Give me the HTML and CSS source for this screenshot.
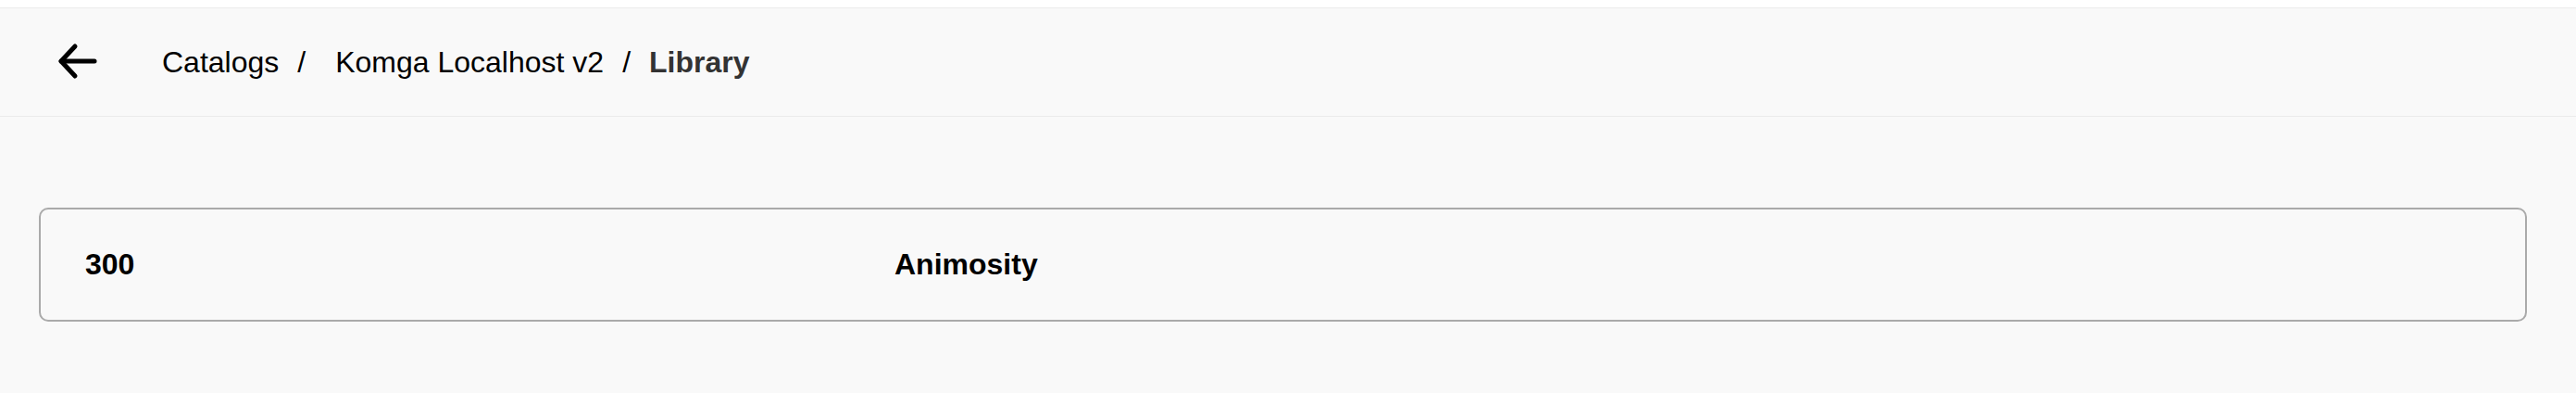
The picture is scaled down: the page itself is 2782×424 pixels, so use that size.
FILE: index.html
```html
<!DOCTYPE html>
<html lang="en">
<head>
<meta charset="utf-8">
<title>Library</title>
<link rel="stylesheet" href="styles.css">
</head>
<body>
<div class="page">
  <header class="topbar">
    <button class="back" aria-label="Back">
      <svg width="44" height="40" viewBox="0 0 44 40" fill="none" stroke="#000" stroke-width="5" stroke-linecap="round" stroke-linejoin="round">
        <line x1="4" y1="20" x2="40" y2="20"/>
        <polyline points="19,4 4,20 19,36"/>
      </svg>
    </button>
    <nav class="crumbs">
      <a class="crumb">Catalogs</a>
      <span class="sep">/</span>
      <a class="crumb crumb-pad">Komga Localhost v2</a>
      <span class="sep">/</span>
      <span class="crumb current">Library</span>
    </nav>
  </header>
  <main class="content">
    <div class="row">
      <span class="cell">300</span>
      <span class="cell">Animosity</span>
    </div>
  </main>
</div>
</body>
</html>
```
FILE: styles.css
```css
html, body {
  margin: 0;
  padding: 0;
  background: #ffffff;
}
body {
  padding-top: 8px;
  font-family: "Liberation Sans", Arial, sans-serif;
  color: #000;
}
.page {
  background: #f9f9f9;
  border-top: 1px solid #ebebeb;
  min-height: 415px;
}
.topbar {
  height: 116px;
  display: flex;
  align-items: center;
  border-bottom: 1px solid #ebebeb;
  padding-left: 62px;
}
.back {
  display: flex;
  padding: 0;
  margin: 0;
  border: 0;
  background: none;
  margin-top: -2px;
}
.crumbs {
  display: flex;
  align-items: center;
  margin-left: 69px;
  font-size: 32px;
  line-height: 37px;
}
.crumb {
  color: #000;
  text-decoration: none;
}
.crumb-pad {
  padding-left: 12px;
}
.sep {
  margin: 0 20px;
  color: #000;
}
.current {
  font-weight: bold;
  color: #333333;
}
.content {
  padding: 98px 53px 0 42px;
}
.row {
  height: 123px;
  box-sizing: border-box;
  border: 2px solid #aaaaaa;
  border-radius: 10px;
  display: grid;
  grid-template-columns: 874px 1fr;
  align-items: center;
  padding: 0 48px;
  font-size: 32px;
  font-weight: bold;
}
```
